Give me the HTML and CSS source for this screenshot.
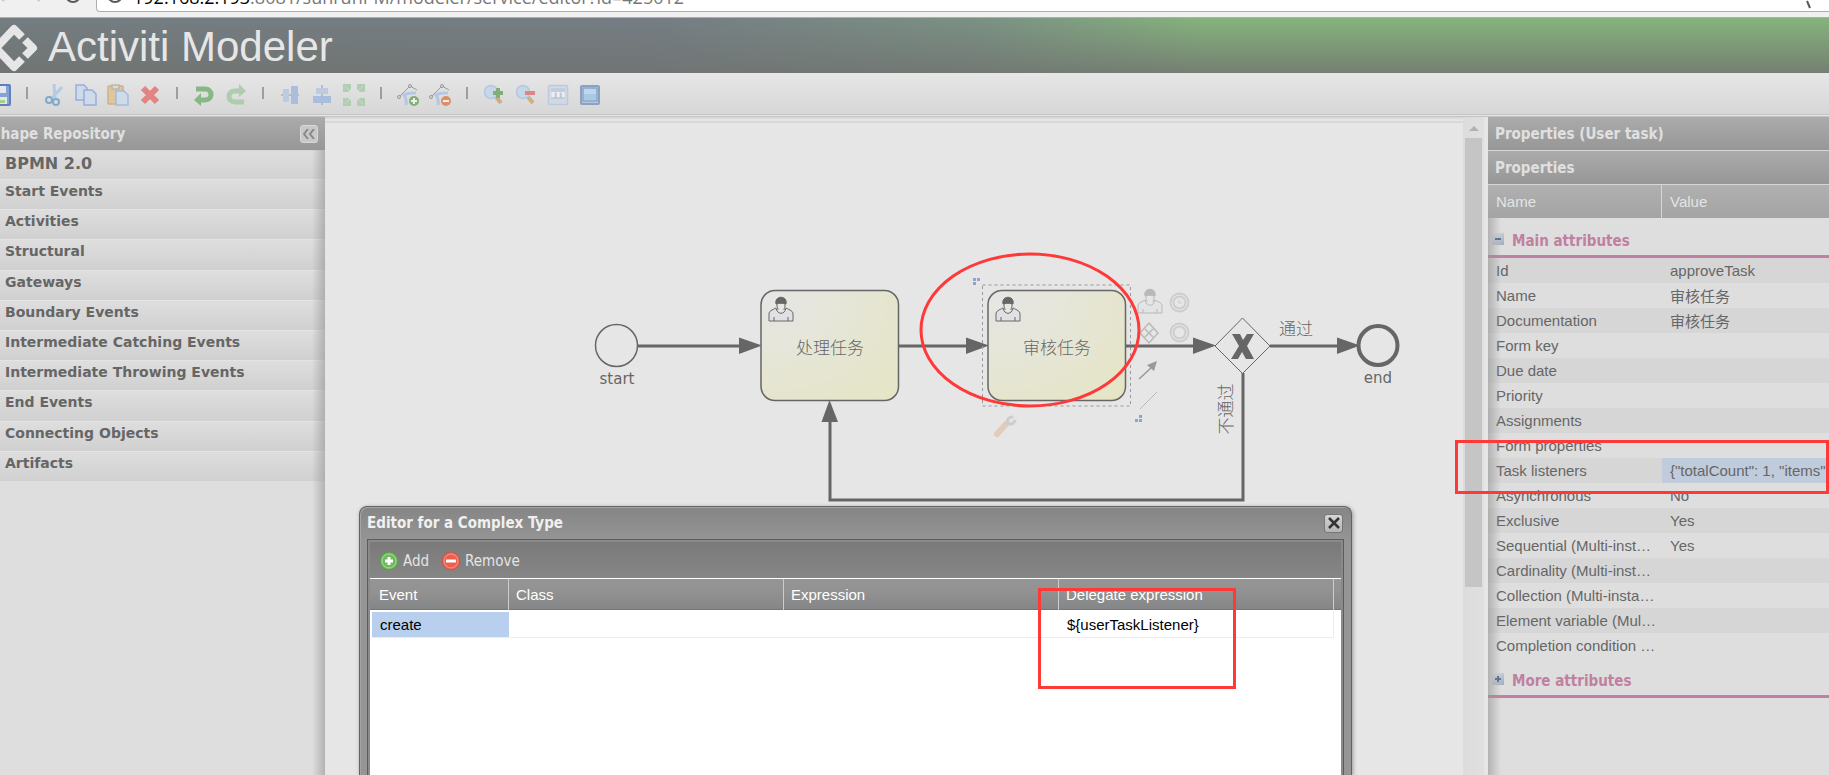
FILE: index.html
```html
<!DOCTYPE html>
<html lang="en">

<head>
    <meta charset="UTF-8">
    <meta name="viewport" content="width=device-width, initial-scale=1.0">
    <title>Activiti Modeler</title>
    <link rel="stylesheet" href="styles.css">
</head>

<body>

<div class="browser-bar">
    <svg class="nav-icons" width="96" height="12" viewBox="0 0 96 12" fill="none">
        <path d="M4 1l-6-6M38 1l6-6" stroke="#c4c4c4" stroke-width="2"/>
        <circle cx="73" cy="-5" r="7" stroke="#5a5a5a" stroke-width="2"/>
    </svg>
    <div class="address">
        <svg width="20" height="11" viewBox="0 0 20 11" fill="none">
            <circle cx="10" cy="-5" r="7" stroke="#5a5a5a" stroke-width="2"/>
        </svg>
        <span class="url"><b>192.168.2.193</b>:8081/sunrunPM/modeler/service/editor?id=425012</span>
        <svg class="key-icon" width="20" height="11" viewBox="0 0 20 11">
            <path d="M6 1l3 7" stroke="#5a5a5a" stroke-width="2"/>
        </svg>
    </div>
</div>

<div class="app">
    <header class="header">
        <svg width="56" height="55" viewBox="0 0 56 55" fill="none" stroke="#e6e6e6" stroke-width="8" stroke-linejoin="round">
            <path d="M38 19L30 11L12 30L30 49L38 41"/>
            <path d="M41 22L49 30L41 38" stroke-linejoin="round"/>
        </svg>
        <h1>Activiti Modeler</h1>
    </header>

    <div class="toolbar">
        <button title="Save"><svg viewBox="0 0 22 22"><rect x="1" y="1" width="20" height="20" rx="1" fill="#83a3d4" stroke="#5f80bb" stroke-width="2"/><path d="M4 2h13v7H4z" fill="#e2e8f0"/><path d="M4 13h14v7H4z" fill="#e2e8e2"/><path d="M7 16h9v3H7z" fill="#a7cf8b"/></svg></button>
        <span class="sep"></span>
        <button title="Cut"><svg viewBox="0 0 22 22" fill="none"><path d="M11 0L12 14M19 3L8 15" stroke="#b3cbe2" stroke-width="3"/><circle cx="6" cy="16" r="3" stroke="#7fa9cf" stroke-width="2"/><circle cx="13" cy="18" r="3" stroke="#7fa9cf" stroke-width="2"/></svg></button>
        <button title="Copy"><svg viewBox="0 0 22 22" fill="#cfdaea" stroke="#95aeda" stroke-width="1.5"><path d="M1 1h8l3 3v12H1z"/><path d="M9 6h8l4 4v11H9z"/></svg></button>
        <button title="Paste"><svg viewBox="0 0 22 22" stroke-width="1.5"><rect x="1" y="2" width="15" height="18" rx="1" fill="#dfc69f" stroke="#ccb28a"/><path d="M5 1h7v4H5z" fill="#dcdcd6" stroke="#bfb7a5"/><path d="M9 7h8l4 4v10H9z" fill="#d0dbea" stroke="#a7bbdb"/></svg></button>
        <button title="Delete"><svg viewBox="0 0 22 22"><path d="M4 4l14 14M18 4L4 18" stroke="#e28483" stroke-width="6"/></svg></button>
        <span class="sep"></span>
        <button title="Undo"><svg viewBox="0 0 22 22" fill="none"><path d="M3 5h9c8 0 8 11 0 11H7" stroke="#86b886" stroke-width="5"/><path d="M8 9v13L1 16z" fill="#86b886"/></svg></button>
        <button title="Redo"><svg viewBox="0 0 22 22" fill="none"><path d="M15 7h-5c-8 0-8 11 0 11h9" stroke="#aecdae" stroke-width="5"/><path d="M14 0v13l7-6z" fill="#aecdae"/></svg></button>
        <span class="sep"></span>
        <button title="Align vertical"><svg viewBox="0 0 22 22"><path d="M2 11h18" stroke="#999"/><rect x="4" y="5" width="6" height="13" fill="#bccae2"/><rect x="12" y="2" width="7" height="18" fill="#aabddc"/></svg></button>
        <button title="Align horizontal"><svg viewBox="0 0 22 22"><path d="M11 1v20" stroke="#999"/><rect x="5" y="4" width="12" height="6" fill="#bccae2"/><rect x="2" y="12" width="18" height="7" fill="#aabddc"/></svg></button>
        <button title="Same size"><svg viewBox="0 0 22 22" fill="#b0ceb0"><path d="M0 0h8v5L5 8H0zM14 0h8v8h-5l-3-3zM0 14h5l3 3v5H0zM17 14h5v8h-8v-5z"/><path d="M2 2l4 4M20 2l-4 4M2 20l4-4M20 20l-4-4" stroke="#cadaca"/></svg></button>
        <span class="sep"></span>
        <button title="Add docker"><svg viewBox="0 0 22 22" fill="none"><path d="M9 21c1-5 0-7-2-10 5-3 9-2 12-2" stroke="#b3c8e4" stroke-width="3"/><path d="M2 13L13 2l7 4" stroke="#999"/><circle cx="2" cy="13" r="1.5" fill="#ddd" stroke="#999"/><circle cx="13" cy="2" r="1.5" fill="#ddd" stroke="#999"/><circle cx="17" cy="17" r="5" fill="#83ae75"/><path d="M17 14v6M14 17h6" stroke="#eee" stroke-width="2"/></svg></button>
        <button title="Remove docker"><svg viewBox="0 0 22 22" fill="none"><path d="M9 21c1-5 0-7-2-10 5-3 9-2 12-2" stroke="#b3c8e4" stroke-width="3"/><path d="M2 13L13 2l7 4" stroke="#999"/><circle cx="2" cy="13" r="1.5" fill="#ddd" stroke="#999"/><circle cx="13" cy="2" r="1.5" fill="#ddd" stroke="#999"/><circle cx="17" cy="17" r="5" fill="#dd8f65"/><path d="M14 17h6" stroke="#eee" stroke-width="2"/></svg></button>
        <span class="sep"></span>
        <button title="Zoom in"><svg viewBox="0 0 22 22"><path d="M13 13l5 6" stroke="#cfae85" stroke-width="4"/><circle cx="8" cy="8" r="6.5" fill="#c6d7e9" stroke="#b5c8de" stroke-width="1.5"/><path d="M15 4v10M10 9h10" stroke="#80b078" stroke-width="4"/></svg></button>
        <button title="Zoom out"><svg viewBox="0 0 22 22"><path d="M13 13l5 6" stroke="#cfae85" stroke-width="4"/><circle cx="8" cy="8" r="6.5" fill="#c6d7e9" stroke="#b5c8de" stroke-width="1.5"/><path d="M10 9h10" stroke="#e08585" stroke-width="4"/></svg></button>
        <button title="Zoom to standard"><svg viewBox="0 0 22 22"><rect x="1.5" y="1.5" width="19" height="19" rx="1" fill="#d3d9e2" stroke="#bcc9df" stroke-width="1.5"/><rect x="4" y="4" width="14" height="4" fill="#c2cddf"/><path d="M6 8v6M11 8v6M16 8v6" stroke="#eee" stroke-width="3"/><path d="M4 14h14M9 9v5M14 9v5" stroke="#a9bad6"/></svg></button>
        <button title="Zoom to fit"><svg viewBox="0 0 22 22"><rect x="2" y="2" width="18" height="18" rx="1" fill="#b7c6da" stroke="#8aa1c5" stroke-width="2"/><rect x="4" y="4" width="14" height="13" fill="#a9c9e4" stroke="#8399b5"/><path d="M5 5h12v5H5z" fill="#bdd8ec"/></svg></button>
    </div>

    <main class="workspace">
        <aside class="shapes">
            <h2 class="panel-title">Shape Repository
                <button class="collapse" title="Collapse"><svg width="12" height="10" viewBox="0 0 12 10" fill="none" stroke="#888" stroke-width="2"><path d="M5 0L1 5l4 5M11 0L7 5l4 5"/></svg></button>
            </h2>
            <h3 class="stencil">BPMN 2.0</h3>
            <ul class="shape-list">
                <li>Start Events</li>
                <li>Activities</li>
                <li>Structural</li>
                <li>Gateways</li>
                <li>Boundary Events</li>
                <li>Intermediate Catching Events</li>
                <li>Intermediate Throwing Events</li>
                <li>End Events</li>
                <li>Connecting Objects</li>
                <li>Artifacts</li>
            </ul>
        </aside>

        <section class="canvas">
            <svg class="diagram" width="1138" height="658" viewBox="325 117 1138 658" fill="none" stroke="#666">
                <defs>
                    <radialGradient id="taskFill" cx="10%" cy="10%" r="120%">
                        <stop offset="0" stop-color="#e6e6e4"/>
                        <stop offset="1" stop-color="#e5e5c6"/>
                    </radialGradient>
                    <g id="user">
                        <path d="M1 23v-7c0-3 3-4 7-6 1 7 9 7 10 0 4 2 7 3 7 6v7zM6 23v-4M20 23v-4" fill="#e0e1e4"/>
                        <path d="M9 5v3c0 2 1 2 1 4M17 5v3c0 2-1 2-1 4"/>
                        <path d="M8 6c-2-9 12-9 10 0-2-1-8-1-10 0z" fill="#666"/>
                    </g>
                </defs>

                <!-- sequence flows -->
                <g stroke-width="3">
                    <path d="M638 346H742"/>
                    <path d="M899 346H970"/>
                    <path d="M1126 346H1196"/>
                    <path d="M1270 346H1340"/>
                    <path d="M1243 373V500H830V420"/>
                </g>
                <g fill="#666" stroke="none">
                    <path d="M739 337.500L762 345.500L739 354z"/>
                    <path d="M966 337.500L989 345.500L966 354z"/>
                    <path d="M1193 337.500L1216 345.500L1193 354z"/>
                    <path d="M1337 337.500L1360 345.500L1337 354z"/>
                    <path d="M821.500 422L829.500 400L838 422z"/>
                </g>

                <!-- events -->
                <circle cx="616.500" cy="345.500" r="21" stroke-width="1.500"/>
                <circle cx="1378" cy="345.500" r="19.500" stroke-width="4"/>

                <!-- tasks -->
                <g stroke-width="1.500" fill="url(#taskFill)">
                    <rect x="761" y="290.500" width="137.500" height="110" rx="14"/>
                    <rect x="988" y="290.500" width="137.500" height="110" rx="14"/>
                </g>
                <use href="#user" x="768" y="298"/>
                <use href="#user" x="995" y="298"/>
                <rect x="982.500" y="285" width="148" height="121" stroke="#999" stroke-dasharray="3 3"/>

                <!-- gateway -->
                <path d="M1242.500 318l27.500 28-27.500 27.500L1215 346z"/>
                <path d="M1232 334h8l3 6 4-6h7l-7 12 7 13h-8l-4-7-4 7h-7l8-13z" fill="#666" stroke="none"/>

                <!-- resize handles -->
                <g fill="#8fa6c6" stroke="none">
                    <path d="M973 278h3v3h-3zM977 278h3v3h-3zM973 282h3v3h-3z"/>
                    <path d="M1139 415h3v3h-3zM1135 419h3v3h-3zM1139 419h3v3h-3z"/>
                </g>

                <!-- shape menu -->
                <g opacity="0.35">
                    <use href="#user" x="1137" y="290"/>
                    <path d="M1149 323l9 10-9 10-9-10zM1145 329l8 8M1153 329l-8 8" stroke-width="1.500"/>
                    <path d="M1140 409L1157 392"/>
                </g>
                <g stroke="#cdcdcd" stroke-width="2">
                    <circle cx="1179.500" cy="302.500" r="9"/>
                    <circle cx="1179.500" cy="302.500" r="6"/>
                    <path d="M1179 300v3h3" stroke-width="1"/>
                    <circle cx="1179.500" cy="332.500" r="9"/>
                    <circle cx="1179.500" cy="332.500" r="6"/>
                </g>
                <g opacity="0.6">
                    <path d="M1139 379L1152 367" stroke-width="1.500"/>
                    <path d="M1157 361l-3 10-7-6z" fill="#666" stroke="none"/>
                </g>
                <g stroke-linecap="round">
                    <path d="M997 434L1006 424" stroke="#e3cbb9" stroke-width="6"/>
                    <path d="M1006 424L1008 421M1012 417c-6 0-6 8 0 7l3-3" stroke="#cdcdcd" stroke-width="3"/>
                </g>

                <g class="labels" fill="#666" stroke="none" text-anchor="middle">
                    <text x="617" y="384">start</text>
                    <text x="1378" y="383">end</text>
                    <text class="cn" x="830" y="354">处理任务</text>
                    <text class="cn" x="1057" y="354">审核任务</text>
                    <text class="cn" x="1296" y="335">通过</text>
                    <text class="cn" transform="translate(1232 409) rotate(-90)">不通过</text>
                </g>
            </svg>
        </section>

        <div class="scrollbar"><div class="thumb"></div></div>

        <aside class="properties">
            <h2 class="panel-title">Properties (User task)</h2>
            <h2 class="panel-title">Properties</h2>
            <table class="grid props">
                <colgroup><col class="col-name"><col></colgroup>
                <thead>
                    <tr><th>Name</th><th>Value</th></tr>
                </thead>
                <tbody>
                    <tr class="group"><th colspan="2"><button class="toggle" title="Collapse group"><svg width="12" height="12" viewBox="0 0 12 12"><path d="M3 6h6" stroke="#5c6f8c" stroke-width="2"/></svg></button>Main attributes</th></tr>
                    <tr><td>Id</td><td>approveTask</td></tr>
                    <tr><td>Name</td><td>审核任务</td></tr>
                    <tr><td>Documentation</td><td>审核任务</td></tr>
                    <tr><td>Form key</td><td></td></tr>
                    <tr><td>Due date</td><td></td></tr>
                    <tr><td>Priority</td><td></td></tr>
                    <tr><td>Assignments</td><td></td></tr>
                    <tr><td>Form properties</td><td></td></tr>
                    <tr><td>Task listeners</td><td class="selected">{"totalCount": 1, "items"</td></tr>
                    <tr><td>Asynchronous</td><td>No</td></tr>
                    <tr><td>Exclusive</td><td>Yes</td></tr>
                    <tr><td>Sequential (Multi-instance)</td><td>Yes</td></tr>
                    <tr><td>Cardinality (Multi-instance)</td><td></td></tr>
                    <tr><td>Collection (Multi-instance)</td><td></td></tr>
                    <tr><td>Element variable (Multi-instance)</td><td></td></tr>
                    <tr><td>Completion condition (Multi-instance)</td><td></td></tr>
                </tbody>
                <tbody>
                    <tr class="group"><th colspan="2"><button class="toggle" title="Expand group"><svg width="12" height="12" viewBox="0 0 12 12"><path d="M3 6h6M6 3v6" stroke="#5c6f8c" stroke-width="2"/></svg></button>More attributes</th></tr>
                </tbody>
            </table>
        </aside>
    </main>
</div>

<div class="dialog" role="dialog" aria-label="Editor for a Complex Type">
    <div class="dialog-title">
        <span>Editor for a Complex Type</span>
        <button class="close" title="Close"><svg width="12" height="12" viewBox="0 0 12 12"><path d="M1 1l10 10M11 1L1 11" stroke="#333" stroke-width="2.500"/></svg></button>
    </div>
    <div class="dialog-body">
        <div class="dialog-tools">
            <button><svg width="20" height="20" viewBox="0 0 20 20"><circle cx="10" cy="10" r="9" fill="#6fba5c" stroke="#5d9a4e"/><circle cx="10" cy="10" r="7" fill="none" stroke="#a8d99b"/><path d="M10 6v8M6 10h8" stroke="#fff" stroke-width="3"/></svg>Add</button>
            <button><svg width="20" height="20" viewBox="0 0 20 20"><circle cx="10" cy="10" r="9" fill="#ea5f50" stroke="#c4584c"/><circle cx="10" cy="10" r="7" fill="none" stroke="#f39a8e"/><path d="M5 10h10" stroke="#fff" stroke-width="3"/></svg>Remove</button>
        </div>
        <table class="grid listeners">
            <colgroup><col class="col-event"><col class="col-wide"><col class="col-wide"><col class="col-wide"><col></colgroup>
            <thead>
                <tr><th>Event</th><th>Class</th><th>Expression</th><th>Delegate expression</th><th></th></tr>
            </thead>
            <tbody>
                <tr><td class="selected">create</td><td></td><td></td><td>${userTaskListener}</td><td></td></tr>
            </tbody>
        </table>
    </div>
</div>

<svg class="mark mark-task" viewBox="0 0 222 156" fill="none"><ellipse cx="111" cy="78" rx="109" ry="76" stroke="#ff3838" stroke-width="3"/></svg>
<div class="mark mark-listener"></div>
<div class="mark mark-delegate"></div>

</body>
</html>
```
FILE: styles.css
```css
body {
    font-family: "Liberation Sans", "Noto Sans CJK SC", Arial, sans-serif;
    font-size: 15px;
    color: #666;
    margin: 0;
    height: 100vh;
    display: flex;
    flex-direction: column;
    overflow: hidden;
    position: relative;
    background-color: #e6e6e6;
}

h1, h2, h3, ul {
    margin: 0;
    padding: 0;
    font-weight: normal;
}

button {
    background: none;
    border: none;
    padding: 0;
    font: inherit;
    color: inherit;
    cursor: pointer;
}

/* browser bar */
.browser-bar {
    display: flex;
    height: 17px;
    flex: none;
    background-color: #f0f0f0;
    border-bottom: 1px solid #adadad;
}

.address {
    flex: 1;
    display: flex;
    align-items: flex-end;
    height: 11px;
    padding: 0 8px;
    gap: 8px;
    background-color: #fff;
    border: 1px solid #adadad;
    border-width: 0 0 1px 1px;
    border-radius: 0 0 0 4px;
    overflow: hidden;
}

.url {
    flex: 1;
    font-family: "Open Sans", sans-serif;
    font-size: 18px;
    line-height: 24px;
    padding-bottom: 2px;
    color: #777;
}

.url b {
    font-weight: normal;
    color: #000;
}

/* app frame, scrolled a little to the right */
.app {
    flex: 1;
    display: flex;
    flex-direction: column;
    margin-left: -16px;
    min-height: 0;
}

.header {
    display: flex;
    align-items: center;
    height: 55px;
    gap: 8px;
    color: #e6e6e6;
    background: linear-gradient(rgba(112, 114, 112, 0), rgba(112, 114, 112, 0.8)),
        linear-gradient(100deg, #747d81 0%, #757d84 36%, #7b9284 54%, #86b47c 66%, #86b47c 100%);
}

.header h1 {
    font-size: 42px;
    line-height: 52px;
    padding-top: 3px;
}

.toolbar {
    display: flex;
    align-items: center;
    height: 38px;
    padding-top: 3px;
    border-bottom: 1px solid #c4c4c4;
    margin-bottom: 1px;
    background: linear-gradient(#e6e6e6, #d7d7d7);
}

.toolbar button {
    width: 32px;
    height: 22px;
    padding: 0 5px;
}

.toolbar svg {
    display: block;
    width: 22px;
    height: 22px;
}

.sep {
    width: 2px;
    height: 12px;
    margin: 0 10px 4px;
    background-color: #a39a9a;
}

.workspace {
    flex: 1;
    display: flex;
    min-height: 0;
    border-top: 1px solid #c2c2c2;
}

.panel-title {
    display: flex;
    align-items: center;
    justify-content: space-between;
    height: 33px;
    padding: 0 7px;
    font-family: "DejaVu Sans Condensed", "DejaVu Sans", sans-serif;
    font-size: 15px;
    font-weight: bold;
    color: #e0e0e0;
    background: linear-gradient(#ababab, #979797);
    border-bottom: 1px solid #d6d6d6;
}

/* shape repository */
.shapes {
    flex: 0 0 341px;
    background-color: #dedede;
    position: relative;
    font-family: "DejaVu Sans", sans-serif;
    font-weight: bold;
}

.shapes::after {
    content: "";
    position: absolute;
    top: 33px;
    right: 0;
    bottom: 0;
    width: 13px;
    background: linear-gradient(to right, rgba(150, 150, 150, 0), rgba(150, 150, 150, 0.6));
}

.collapse {
    display: flex;
    align-items: center;
    justify-content: center;
    width: 18px;
    height: 18px;
    border: 1px solid #d8d8d8;
    border-radius: 3px;
    background-color: #c8c8c8;
}

.stencil {
    height: 28px;
    padding-left: 21px;
    font-size: 16px;
    font-weight: bold;
    line-height: 26px;
    background: linear-gradient(#dedede, #d2d2d2);
}

.shape-list {
    display: flex;
    flex-direction: column;
    height: 302px;
    list-style: none;
    font-weight: bold;
}

.shape-list li {
    flex: 1;
    box-sizing: border-box;
    padding-left: 21px;
    font-size: 14px;
    line-height: 22px;
    border-top: 1px solid #e4e4e4;
    background: linear-gradient(#dedede, #d0d0d0);
}

/* drawing area */
.canvas {
    flex: 1;
    overflow: hidden;
    background: linear-gradient(#dadada 0 2px, #e6e6e6 2px 4px, #d8d8d8 4px 6px, #e6e6e6 6px);
}

.diagram {
    display: block;
}

.labels {
    font-family: "DejaVu Sans", sans-serif;
    font-size: 15px;
}

.labels .cn {
    font-family: "Liberation Sans", "Noto Sans CJK SC", sans-serif;
    font-size: 17px;
    font-weight: 300;
}

.scrollbar {
    flex: none;
    width: 17px;
    padding: 21px 2px 0;
    margin-right: 4px;
    background: linear-gradient(to right, #dcdcdc, #e0e0e0);
    position: relative;
}

.scrollbar::before {
    content: "";
    position: absolute;
    top: 9px;
    left: 6px;
    border: 5px solid transparent;
    border-top-width: 0;
    border-bottom-color: #b0b0b0;
}

.thumb {
    height: 449px;
    background-color: #c5c5c5;
}

/* grids */
.grid {
    width: 100%;
    table-layout: fixed;
    border-spacing: 0;
}

.grid th, .grid td {
    padding: 0 8px;
    text-align: left;
    font-weight: normal;
    white-space: nowrap;
    overflow: hidden;
    text-overflow: ellipsis;
}

/* properties panel */
.properties {
    flex: 0 0 341px;
    background-color: #dedede;
    position: relative;
    overflow: hidden;
}

.properties::after {
    content: "";
    position: absolute;
    top: 101px;
    left: 0;
    bottom: 0;
    width: 13px;
    background: linear-gradient(to left, rgba(150, 150, 150, 0), rgba(150, 150, 150, 0.6));
}

.col-name {
    width: 174px;
}

.props thead th {
    height: 33px;
    color: #e4e4e4;
    background: linear-gradient(#b0b0b0, #a4a4a4);
}

.props thead th:first-child {
    border-right: 1px solid #d6d6d6;
}

.props td {
    height: 25px;
}

.props td:first-child {
    padding-right: 4px;
}

.props td:nth-child(2) {
    padding-right: 0;
    text-overflow: clip;
}

.props tr:nth-child(even) td {
    background-color: #d6d6d6;
}

.props tr .selected.selected {
    background-color: #c0cbdc;
}

.props .group th {
    height: 28px;
    padding: 9px 4px 0;
    font-family: "DejaVu Sans Condensed", "DejaVu Sans", sans-serif;
    font-weight: bold;
    color: #c0809f;
    border-bottom: 3px solid #c0809f;
}

.toggle {
    width: 12px;
    height: 12px;
    margin-right: 8px;
    vertical-align: 1px;
    background: linear-gradient(135deg, #dfe5ec, #9fabbc);
}

.toggle svg {
    display: block;
}

/* complex type editor */
.dialog {
    position: absolute;
    top: 506px;
    left: 359px;
    bottom: 0;
    width: 977px;
    padding: 0 7px;
    border: 1px solid #626262;
    border-bottom: none;
    border-radius: 8px 8px 0 0;
    background: linear-gradient(#858585, #959595 33px);
    box-shadow: inset 1px 1px #a4a4a4, 1px 1px 4px rgba(0, 0, 0, 0.35);
    display: flex;
    flex-direction: column;
}

.dialog-title {
    display: flex;
    justify-content: space-between;
    align-items: center;
    height: 32px;
    padding-right: 1px;
    font-family: "DejaVu Sans Condensed", "DejaVu Sans", sans-serif;
    font-weight: bold;
    color: #f0f0f0;
}

.close {
    display: flex;
    align-items: center;
    justify-content: center;
    width: 19px;
    height: 19px;
    border: 1px solid #777;
    border-radius: 3px;
    background: linear-gradient(#d5d5d5, #b5b5b5);
}

.dialog-body {
    flex: 1;
    border: 1px solid #5c5c5c;
    border-bottom: none;
    background-color: #fff;
    box-shadow: inset 2px 2px #8a8a8a, inset -2px 0 #8a8a8a;
    padding: 2px 2px 0;
}

.dialog-tools {
    display: flex;
    align-items: center;
    gap: 12px;
    height: 34px;
    padding: 2px 0 0 9px;
    font-family: "DejaVu Sans Condensed", "DejaVu Sans", sans-serif;
    color: #e4e4e4;
    background: linear-gradient(#7a7a7a, #868686);
    border-bottom: 1px solid #fff;
}

.dialog-tools button {
    display: flex;
    align-items: center;
    gap: 4px;
}

.col-event {
    width: 139px;
}

.col-wide {
    width: 275px;
}

.listeners {
    color: #000;
}

.listeners th {
    height: 31px;
    padding: 0 7px;
    color: #fff;
    background: linear-gradient(#959595, #929292 40%, #858688 95%, #6e6e6e);
    border-right: 1px solid #ccc;
}

.listeners th:first-child {
    padding-left: 9px;
}

.listeners th:last-child {
    border-right: none;
}

.listeners td {
    height: 25px;
    border-top: 2px solid #fff;
    border-bottom: 1px solid #ededed;
}

.listeners .selected {
    background-color: #b8d0ee;
    border-left: 2px solid #fff;
}

.listeners td:nth-child(4) {
    border-right: 1px solid #ededed;
}

.listeners td:last-child {
    border-bottom-color: #fff;
}

/* red markers */
.mark {
    position: absolute;
    box-sizing: border-box;
    pointer-events: none;
}

.mark-task {
    left: 919px;
    top: 252px;
    width: 222px;
    height: 156px;
}

.mark-listener {
    right: 0;
    top: 440px;
    width: 374px;
    height: 54px;
    border: 3px solid #ff3838;
}

.mark-delegate {
    left: 1038px;
    top: 588px;
    width: 198px;
    height: 101px;
    border: 3px solid #ff3838;
}
```
